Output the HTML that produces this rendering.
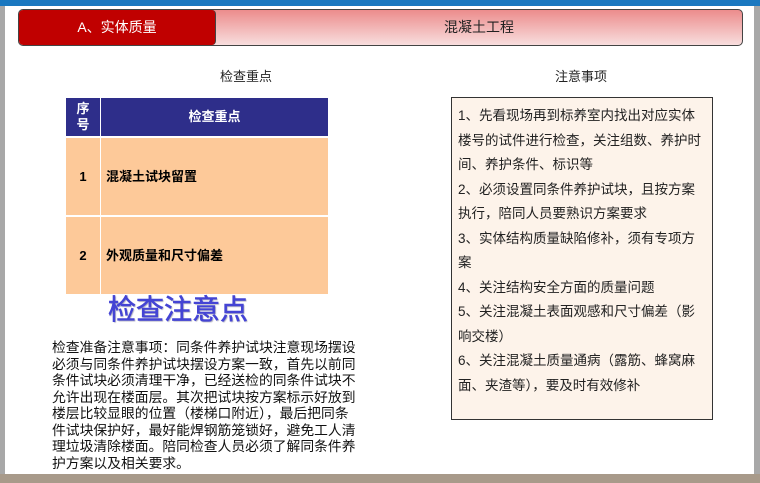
<!DOCTYPE html>
<html><head><meta charset="utf-8"><style>
*{margin:0;padding:0;box-sizing:border-box}
body{width:760px;height:483px;overflow:hidden;background:#fff;position:relative;font-family:"Liberation Sans","Noto Sans CJK SC",sans-serif;}
.abs{position:absolute}
</style></head><body>
<div class="abs" style="left:0;top:0;width:5px;height:483px;background:#a8a8a8"></div>
<div class="abs" style="right:0;top:0;width:6px;height:483px;background:#a8a8a8"></div>
<div class="abs" style="left:0;top:0;width:760px;height:6px;background:#1a78c0"></div>
<div class="abs" style="left:0;top:474px;width:760px;height:9px;background:#a89a8a"></div>
<div class="abs" style="left:18px;top:9px;width:725px;height:37px;border:1px solid #444;border-radius:5px;background:linear-gradient(#ec8c8c,#f8dede);overflow:hidden">
  <div class="abs" style="left:0;top:0;width:197px;height:100%;background:#c00000;border-right:1px solid #444;border-radius:4px;color:#fff;font-size:14px;line-height:35px;text-align:center">A、实体质量</div>
  <div class="abs" style="left:197px;top:0;right:0;height:100%;color:#222;font-size:14px;line-height:35px;text-align:center">混凝土工程</div>
</div>
<div class="abs" style="left:196px;top:66px;width:100px;text-align:center;font-size:13px;color:#222">检查重点</div>
<div class="abs" style="left:531px;top:66px;width:100px;text-align:center;font-size:13px;color:#222">注意事项</div>
<div class="abs" style="left:66px;top:98px;width:34px;height:38px;background:#2e2e8a;color:#fff;font-size:13px;font-weight:bold;text-align:center;line-height:16px;padding-top:3px">序<br>号</div>
<div class="abs" style="left:101px;top:98px;width:227px;height:38px;background:#2e2e8a;color:#fff;font-size:13px;font-weight:bold;text-align:center;line-height:38px">检查重点</div>
<div class="abs" style="left:66px;top:138px;width:34px;height:77px;background:#fdc999;font-size:13px;font-weight:bold;text-align:center;line-height:77px">1</div>
<div class="abs" style="left:101px;top:138px;width:227px;height:77px;background:#fdc999;font-size:13px;font-weight:bold;line-height:77px;padding-left:5px">混凝土试块留置</div>
<div class="abs" style="left:66px;top:217px;width:34px;height:77px;background:#fdc999;font-size:13px;font-weight:bold;text-align:center;line-height:77px">2</div>
<div class="abs" style="left:101px;top:217px;width:227px;height:77px;background:#fdc999;font-size:13px;font-weight:bold;line-height:77px;padding-left:5px">外观质量和尺寸偏差</div>
<div class="abs" style="left:108px;top:292px;font-size:28px;line-height:36px;color:#4444d4;text-shadow:1px 1px 1px #aab;-webkit-text-stroke:0.6px #4444d4">检查注意点</div>
<div class="abs" style="left:52px;top:340px;font-size:13.8px;line-height:16.5px;color:#111;white-space:nowrap">检查准备注意事项：同条件养护试块注意现场摆设<br>必须与同条件养护试块摆设方案一致，首先以前同<br>条件试块必须清理干净，已经送检的同条件试块不<br>允许出现在楼面层。其次把试块按方案标示好放到<br>楼层比较显眼的位置（楼梯口附近），最后把同条<br>件试块保护好，最好能焊钢筋笼锁好，避免工人清<br>理垃圾清除楼面。陪同检查人员必须了解同条件养<br>护方案以及相关要求。</div>
<div class="abs" style="left:451px;top:97px;width:262px;height:323px;border:1px solid #333;background:#fdf3ea;padding:6px 5px 0 6px;font-size:13.5px;line-height:24.5px;color:#222">1、先看现场再到标养室内找出对应实体楼号的试件进行检查，关注组数、养护时间、养护条件、标识等<br>2、必须设置同条件养护试块，且按方案执行，陪同人员要熟识方案要求<br>3、实体结构质量缺陷修补，须有专项方案<br>4、关注结构安全方面的质量问题<br>5、关注混凝土表面观感和尺寸偏差（影响交楼）<br>6、关注混凝土质量通病（露筋、蜂窝麻面、夹渣等），要及时有效修补</div>
</body></html>
